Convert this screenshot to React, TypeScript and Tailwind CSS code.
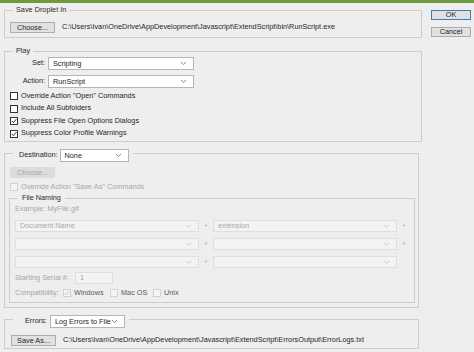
import type { ReactNode } from 'react';

const Chevron = ({ light }: { light?: boolean }) => (
  <svg width="7" height="5" viewBox="0 0 7 5" className="shrink-0">
    <polyline points="1,1 3.5,3.5 6,1" fill="none" stroke={light ? '#c4c4c4' : '#7a7a7a'} strokeWidth="0.9" />
  </svg>
);

const Select = ({ value, className, disabled }: { value?: string; className: string; disabled?: boolean }) => (
  <div
    className={`flex items-center justify-between pl-[4px] pr-[6px] border ${
      disabled ? 'bg-[#f3f3f3] border-[#dedede] text-[#a8a8a8]' : 'bg-white border-[#b5b5b5] text-[#1e1e1e]'
    } ${className}`}
  >
    <span className="leading-none whitespace-nowrap">{value}</span>
    <Chevron light={disabled} />
  </div>
);

const Check = ({ checked, disabled }: { checked?: boolean; disabled?: boolean }) => (
  <span
    className={`flex items-center justify-center w-[8px] h-[8px] shrink-0 border ${
      disabled ? 'border-[#d2d2d2] bg-[#f4f4f4]' : 'border-[#333333] bg-white'
    }`}
  >
    {checked && (
      <svg width="6" height="6" viewBox="0 0 6 6">
        <polyline points="0.8,3 2.4,4.6 5.3,1.2" fill="none" stroke={disabled ? '#bdbdbd' : '#222222'} strokeWidth="0.9" />
      </svg>
    )}
  </span>
);

const CheckRow = ({ label, checked }: { label: string; checked?: boolean }) => (
  <div className="flex items-center gap-[3px] h-[12.5px]">
    <Check checked={checked} />
    <span className="text-[#1e1e1e]">{label}</span>
  </div>
);

const Btn = ({ children, className = '', disabled }: { children: ReactNode; className?: string; disabled?: boolean }) => (
  <div
    className={`flex items-center justify-center border leading-none whitespace-nowrap ${
      disabled ? 'bg-[#dcdcdc] border-[#dcdcdc] text-[#a6a6a6]' : 'bg-[#e1e1e1] border-[#adadad] text-[#1e1e1e]'
    } ${className}`}
  >
    {children}
  </div>
);

const Plus = ({ hidden }: { hidden?: boolean }) => (
  <span className={`w-[14px] text-center text-[#b8b8b8] ${hidden ? 'invisible' : ''}`}>+</span>
);

export default function App() {
  return (
    <div className="w-[474px] h-[352px] overflow-hidden bg-[#eeeeee] font-['Liberation_Sans',Arial,sans-serif] text-[7.3px] text-[#1e1e1e]">
      <div className="h-[3px] bg-[#6f9a3c]" />

      <div className="flex">
        {/* Left column */}
        <div className="pl-[4px] pt-[1px] w-[422px]">
          {/* Save Droplet In */}
          <fieldset className="w-[418px] border border-[#cdcdcd] pl-[5px] pt-[6px] pb-[4px]">
            <legend className="ml-[3px] px-[3px] leading-[12px] text-[#2a2a2a]">Save Droplet In</legend>
            <div className="flex items-center gap-[7px] whitespace-nowrap">
              <Btn className="w-[45px] h-[11px]">Choose...</Btn>
              <span>C:\Users\Ivan\OneDrive\AppDevelopment\Javascript\ExtendScript\bin\RunScript.exe</span>
            </div>
          </fieldset>

          {/* Play */}
          <fieldset className="mt-[7px] w-[418px] border border-[#cdcdcd] pl-[5px] pb-[1px]">
            <legend className="ml-[3px] px-[3px] leading-[12px] text-[#2a2a2a]">Play</legend>
            <div className="flex items-center gap-[3px]">
              <span className="w-[35px] text-right">Set:</span>
              <Select value="Scripting" className="w-[146px] h-[13px]" />
            </div>
            <div className="flex items-center gap-[3px] mt-[5px]">
              <span className="w-[35px] text-right">Action:</span>
              <Select value="RunScript" className="w-[146px] h-[13px]" />
            </div>
            <div className="mt-[2px]">
              <CheckRow label={'Override Action "Open" Commands'} />
              <CheckRow label="Include All Subfolders" />
              <CheckRow label="Suppress File Open Options Dialogs" checked />
              <CheckRow label="Suppress Color Profile Warnings" checked />
            </div>
          </fieldset>

          {/* Destination */}
          <fieldset className="mt-[3px] w-[415px] border border-[#cdcdcd] pl-[4px] pr-[3px] pb-[4px]">
            <legend className="ml-[4px] pl-[6px] pr-[4px] pt-[4px]">
              <div className="flex items-center gap-[2px]">
                <span>Destination:</span>
                <Select value="None" className="w-[69px] h-[13px]" />
              </div>
            </legend>
            <Btn disabled className="ml-[1px] mt-[5px] w-[45px] h-[11px]">Choose...</Btn>
            <div className="ml-[1px] mt-[3px] flex items-center gap-[3px] h-[12px] text-[#a6a6a6]">
              <Check disabled />
              <span>Override Action "Save As" Commands</span>
            </div>

            {/* File Naming */}
            <fieldset className="border border-[#cdcdcd] pl-[5px] pb-[3px]">
              <legend className="ml-[2px] pl-[5px] pr-[4px] leading-[10px] text-[#2a2a2a]">File Naming</legend>
              <div className="h-[12px] flex items-center text-[#a6a6a6]">Example: MyFile.gif</div>
              <div className="mt-[5px] flex flex-col gap-[6px]">
                <div className="flex items-center">
                  <Select disabled value="Document Name" className="w-[184px] h-[12px]" />
                  <Plus />
                  <Select disabled value="extension" className="w-[184px] h-[12px]" />
                  <Plus />
                </div>
                <div className="flex items-center">
                  <Select disabled className="w-[184px] h-[12px]" />
                  <Plus />
                  <Select disabled className="w-[184px] h-[12px]" />
                  <Plus />
                </div>
                <div className="flex items-center">
                  <Select disabled className="w-[184px] h-[12px]" />
                  <Plus />
                  <Select disabled className="w-[184px] h-[12px]" />
                  <Plus hidden />
                </div>
              </div>
              <div className="mt-[4px] flex items-center text-[#a6a6a6]">
                <span className="w-[60px]">Starting Serial #:</span>
                <div className="w-[38px] h-[12px] flex items-center pl-[4px] bg-[#f3f3f3] border border-[#dedede]">1</div>
              </div>
              <div className="mt-[3px] h-[12px] flex items-center text-[#a6a6a6]">
                <span className="w-[48px]">Compatibility:</span>
                <div className="flex items-center gap-[3px] w-[47px]">
                  <Check disabled checked />
                  <span className="text-[#5a5a5a]">Windows</span>
                </div>
                <div className="flex items-center gap-[3px] w-[43px]">
                  <Check disabled />
                  <span className="text-[#5a5a5a]">Mac OS</span>
                </div>
                <div className="flex items-center gap-[3px]">
                  <Check disabled />
                  <span className="text-[#5a5a5a]">Unix</span>
                </div>
              </div>
            </fieldset>
          </fieldset>

          {/* Errors */}
          <fieldset className="mt-[3px] w-[415px] border border-[#cdcdcd] pl-[6px] pt-[7px] pb-[2px]">
            <legend className="ml-[2px] pl-[12px] pr-[4px] pt-[4px]">
              <div className="flex items-center gap-[3px]">
                <span>Errors:</span>
                <Select value="Log Errors to File" className="w-[75px] h-[13px]" />
              </div>
            </legend>
            <div className="flex items-center gap-[7px] whitespace-nowrap">
              <Btn className="w-[45px] h-[11px]">Save As...</Btn>
              <span>C:\Users\Ivan\OneDrive\AppDevelopment\Javascript\ExtendScript\ErrorsOutput\ErrorLogs.txt</span>
            </div>
          </fieldset>
        </div>

        {/* Right column */}
        <div className="ml-[9px] pt-[7px] flex flex-col gap-[7px]">
          <Btn className="w-[40px] h-[10px] !border-[#3d7cc0]">OK</Btn>
          <Btn className="w-[40px] h-[10px]">Cancel</Btn>
        </div>
      </div>
    </div>
  );
}
